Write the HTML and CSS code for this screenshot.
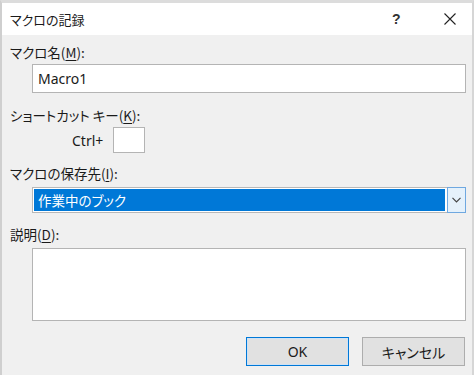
FILE: index.html
```html
<!DOCTYPE html>
<html lang="ja">
<head>
<meta charset="utf-8">
<link rel="stylesheet" href="styles.css">
</head>
<body>
<div class="window">
  <div class="titlebar">
    <span class="title">マクロの記録</span>
    <span class="help">?</span>
    <span class="close">
      <svg width="12" height="12" viewBox="0 0 12 12"><path d="M0.5 0.5 L11.5 11.5 M11.5 0.5 L0.5 11.5" stroke="#222" stroke-width="1.1" fill="none"/></svg>
    </span>
  </div>
  <div class="content">
    <div class="label l-name">マクロ名(<u>M</u>):</div>
    <div class="field textbox">Macro1</div>
    <div class="label l-short">ショートカット キー(<u>K</u>):</div>
    <div class="ctrl-row">
      <span class="ctrl">Ctrl+</span>
      <span class="keybox"></span>
    </div>
    <div class="label l-store">マクロの保存先(<u>I</u>):</div>
    <div class="field combo">
      <span class="selected">作業中のブック</span>
      <span class="drop">
        <svg width="9" height="6" viewBox="0 0 9 6"><path d="M0.5 0.8 L4.5 4.8 L8.5 0.8" stroke="#444" stroke-width="1.2" fill="none"/></svg>
      </span>
    </div>
    <div class="label l-desc">説明(<u>D</u>):</div>
    <div class="field desc"></div>
    <div class="buttons">
      <span class="btn ok">OK</span>
      <span class="btn cancel">キャンセル</span>
    </div>
  </div>
</div>
</body>
</html>
```
FILE: styles.css
```css
html, body {
  margin: 0;
  padding: 0;
  background: #f0f0f0;
}
.window {
  width: 474px;
  height: 375px;
  box-sizing: border-box;
  border-top: 3px solid #dcdcdc;
  border-left: 2px solid #cfcfcf;
  border-right: 2px solid #d6d6d6;
  background: #f0f0f0;
  font-family: "Noto Sans CJK JP", "Noto Sans", sans-serif;
  font-feature-settings: "palt";
  font-size: 13.5px;
  color: #1a1a1a;
  display: flex;
  flex-direction: column;
}
.titlebar {
  height: 32px;
  background: #fff;
  display: flex;
  align-items: center;
  padding-left: 8px;
  flex: none;
}
.title {
  flex: 1;
  font-size: 13px;
}
.help {
  width: 14px;
  font-family: "Liberation Sans", sans-serif;
  font-size: 14px;
  font-weight: bold;
  color: #333;
  margin-right: 38px;
}
.close {
  display: flex;
  width: 12px;
  margin-right: 16px;
}
.content {
  padding: 0 6px 0 8px;
  display: flex;
  flex-direction: column;
}
.label {
  line-height: 16px;
  height: 16px;
}
.label u {
  text-underline-offset: 2px;
}
.l-name { margin-top: 9px; }
.l-short { margin-top: 14px; }
.l-store { margin-top: 12px; }
.l-desc { margin-top: 13px; }
.field {
  margin-left: 22px;
  box-sizing: border-box;
  border: 1px solid #b4b4b4;
  background: #fff;
}
.textbox {
  margin-top: 4px;
  height: 29px;
  padding-left: 5px;
  display: flex;
  align-items: center;
  font-family: "Noto Sans", "Noto Sans CJK JP", sans-serif;
  font-size: 14px;
}
.ctrl-row {
  margin-top: 4px;
  display: flex;
  align-items: center;
  height: 26px;
}
.ctrl {
  margin-left: 62px;
  width: 41px;
  font-family: "Noto Sans", sans-serif;
  font-size: 14px;
}
.keybox {
  width: 32px;
  height: 26px;
  box-sizing: border-box;
  border: 1px solid #b4b4b4;
  background: #fff;
}
.combo {
  margin-top: 6px;
  height: 26px;
  display: flex;
  padding: 1px 0 1px 1px;
  border-color: #b8b8b8;
}
.selected {
  flex: 1;
  background: #0078d7;
  color: #fff;
  padding-left: 4px;
  display: flex;
  align-items: center;
  font-size: 13.5px;
}
.drop {
  width: 19px;
  margin: -2px -1px -2px 2px;
  box-sizing: border-box;
  border: 1px solid #6fa8e0;
  background: #e5f1fb;
  display: flex;
  align-items: center;
  justify-content: center;
}
.desc {
  margin-top: 6px;
  height: 73px;
}
.buttons {
  margin-top: 16px;
  display: flex;
  justify-content: flex-end;
  gap: 13px;
  padding-right: 1px;
}
.btn {
  width: 103px;
  height: 29px;
  box-sizing: border-box;
  background: #e1e1e1;
  border: 1px solid #adadad;
  display: flex;
  align-items: center;
  justify-content: center;
  font-size: 14px;
}
.ok {
  border: 1px solid #0078d7;
  box-shadow: inset 0 0 0 1px #cfe2f5;
  font-family: "Noto Sans", sans-serif;
}
```
